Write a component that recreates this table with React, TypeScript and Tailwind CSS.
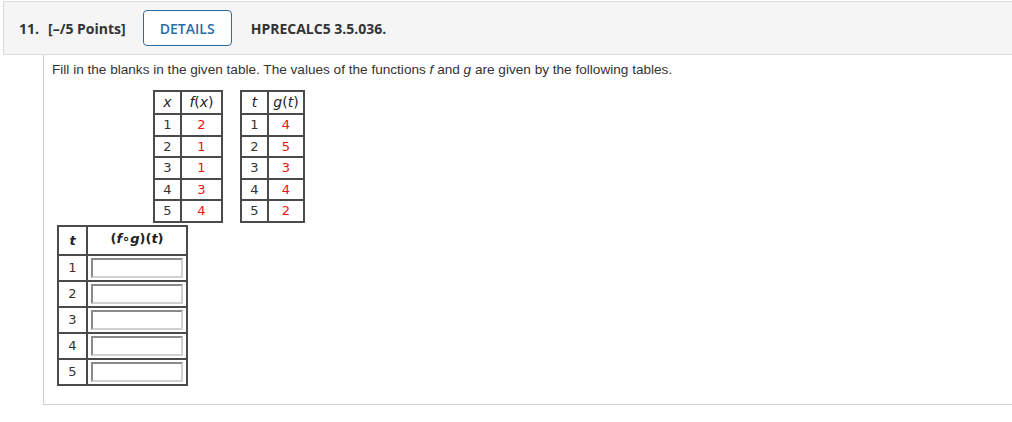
import React from "react";

const fRows = [
  [1, 2],
  [2, 1],
  [3, 1],
  [4, 3],
  [5, 4],
];

const gRows = [
  [1, 4],
  [2, 5],
  [3, 3],
  [4, 4],
  [5, 2],
];

const cell = "border-2 border-[#4a4a4a] text-center";

const ValueTable: React.FC<{ a: string; fn: string; rows: number[][]; wa: string; wb: string }> = ({ a, fn, rows, wa, wb }) => (
  <table className="border-collapse border-2 border-[#4a4a4a]">
    <thead>
      <tr className="h-[21px]">
        <th className={`${cell} ${wa} font-normal italic text-[14px] text-[#222]`}>{a}</th>
        <th className={`${cell} ${wb} font-normal text-[14px] text-[#222]`}>
          <i>{fn}</i>(<i>{a}</i>)
        </th>
      </tr>
    </thead>
    <tbody>
      {rows.map(([x, y]) => (
        <tr key={x} className="h-[21px]">
          <td className={`${cell} text-[#333]`}>{x}</td>
          <td className={`${cell} text-[#ee1111]`}>{y}</td>
        </tr>
      ))}
    </tbody>
  </table>
);

export default function App() {
  return (
    <div className="w-[1012px] h-[422px] bg-white pt-px" style={{ fontFamily: "'Open Sans', sans-serif" }}>
      <div className="ml-[3px] h-[54px] bg-[#f5f5f5] border border-r-0 border-[#dcdcdc] flex items-center text-[14px] font-bold text-[#333]">
        <span className="ml-[15px]">11.</span>
        <span className="ml-[9px]">[–/5 Points]</span>
        <button className="ml-[17px] w-[89px] h-[36px] rounded-[4px] border border-[#2a6ea5] text-[#2a6ea5] font-semibold text-[14px] bg-white">
          DETAILS
        </button>
        <span className="ml-[19px]">HPRECALC5 3.5.036.</span>
      </div>
      <div className="ml-[43px] h-[350px] border-l border-b border-[#cfcfcf] pl-[8px] pt-[5px]">
        <p className="text-[13.6px] text-[#333] font-normal" style={{ fontFamily: "'Liberation Sans', sans-serif" }}>
          Fill in the blanks in the given table. The values of the functions <i>f</i> and <i>g</i> are given by the following tables.
        </p>
        <div className="flex gap-[17px] ml-[101px] mt-[10px] text-[13px]" style={{ fontFamily: "'DejaVu Sans', sans-serif" }}>
          <ValueTable a="x" fn="f" rows={fRows} wa="w-[27px]" wb="w-[41px]" />
          <ValueTable a="t" fn="g" rows={gRows} wa="w-[27px]" wb="w-[36px]" />
        </div>
        <table className="mt-[2px] ml-[5px] border-collapse border-2 border-[#4a4a4a] text-[13px]" style={{ fontFamily: "'DejaVu Sans', sans-serif" }}>
          <thead>
            <tr className="h-[29px]">
              <th className={`${cell} w-[29px] italic text-[#222]`}>t</th>
              <th className={`${cell} w-[100px] text-[#222] align-top pt-[2px]`}>
                (<i>f</i>∘<i>g</i>)(<i>t</i>)
              </th>
            </tr>
          </thead>
          <tbody>
            {[1, 2, 3, 4, 5].map((n) => (
              <tr key={n} className="h-[26px]">
                <td className={`${cell} text-[#333]`}>{n}</td>
                <td className={`${cell} px-[2px]`}>
                  <div className="mx-auto w-[92px] h-[20px] border-2 border-[#8a8a8a] border-r-[#d0d0d0] border-b-[#d0d0d0] bg-white" />
                </td>
              </tr>
            ))}
          </tbody>
        </table>
      </div>
    </div>
  );
}
